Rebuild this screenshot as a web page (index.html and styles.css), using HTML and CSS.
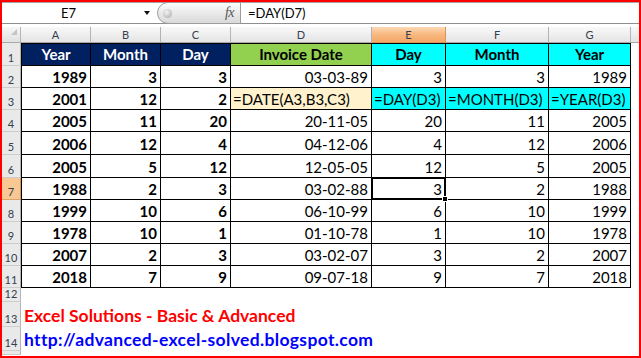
FILE: index.html
```html
<!DOCTYPE html>
<html>
<head>
<meta charset="utf-8">
<link rel="stylesheet" href="styles.css">
</head>
<body>
<div class="frame">
  <div class="fbar">
    <div class="namebox"><span class="ref">E7</span><span class="dd"></span></div>
    <div class="pill"><span class="knob"></span><span class="fx">fx</span></div>
    <div class="formula">=DAY(D7)</div>
  </div>
  <div class="sheet">
    <div class="corner"><span class="tri"></span></div>
    <div class="ch">A</div><div class="ch">B</div><div class="ch">C</div><div class="ch">D</div><div class="ch sel">E</div><div class="ch">F</div><div class="ch">G</div><div class="ch last"></div>

    <div class="rh">1</div>
    <div class="c top a hd navy">Year</div><div class="c top hd navy">Month</div><div class="c top hd navy">Day</div><div class="c top hd green">Invoice Date</div><div class="c top hd cyan">Day</div><div class="c top hd cyan">Month</div><div class="c top hd cyan">Year</div><div class="e"></div>

    <div class="rh">2</div>
    <div class="c a b">1989</div><div class="c b">3</div><div class="c b">3</div><div class="c">03-03-89</div><div class="c">3</div><div class="c">3</div><div class="c">1989</div><div class="e"></div>

    <div class="rh">3</div>
    <div class="c a b">2001</div><div class="c b">12</div><div class="c b">2</div><div class="c f yellow">=DATE(A3,B3,C3)</div><div class="c f cyanf">=DAY(D3)</div><div class="c f cyanf">=MONTH(D3)</div><div class="c f cyanf">=YEAR(D3)</div><div class="e"></div>

    <div class="rh">4</div>
    <div class="c a b">2005</div><div class="c b">11</div><div class="c b">20</div><div class="c">20-11-05</div><div class="c">20</div><div class="c">11</div><div class="c">2005</div><div class="e"></div>

    <div class="rh">5</div>
    <div class="c a b">2006</div><div class="c b">12</div><div class="c b">4</div><div class="c">04-12-06</div><div class="c">4</div><div class="c">12</div><div class="c">2006</div><div class="e"></div>

    <div class="rh">6</div>
    <div class="c a b">2005</div><div class="c b">5</div><div class="c b">12</div><div class="c">12-05-05</div><div class="c">12</div><div class="c">5</div><div class="c">2005</div><div class="e"></div>

    <div class="rh sel">7</div>
    <div class="c a b">1988</div><div class="c b">2</div><div class="c b">3</div><div class="c">03-02-88</div><div class="c active">3<span class="selbox"><span class="handle"></span></span></div><div class="c">2</div><div class="c">1988</div><div class="e"></div>

    <div class="rh">8</div>
    <div class="c a b">1999</div><div class="c b">10</div><div class="c b">6</div><div class="c">06-10-99</div><div class="c">6</div><div class="c">10</div><div class="c">1999</div><div class="e"></div>

    <div class="rh">9</div>
    <div class="c a b">1978</div><div class="c b">10</div><div class="c b">1</div><div class="c">01-10-78</div><div class="c">1</div><div class="c">10</div><div class="c">1978</div><div class="e"></div>

    <div class="rh">10</div>
    <div class="c a b">2007</div><div class="c b">2</div><div class="c b">3</div><div class="c">03-02-07</div><div class="c">3</div><div class="c">2</div><div class="c">2007</div><div class="e"></div>

    <div class="rh">11</div>
    <div class="c a b">2018</div><div class="c b">7</div><div class="c b">9</div><div class="c">09-07-18</div><div class="c">9</div><div class="c">7</div><div class="c">2018</div><div class="e"></div>

    <div class="rh">12</div>
    <div class="wide"></div>

    <div class="rh">13</div>
    <div class="wide note red">Excel Solutions - Basic &amp; Advanced</div>

    <div class="rh">14</div>
    <div class="wide note blue">http://advanced-excel-solved.blogspot.com</div>

    <div class="rh"></div>
    <div class="wide"></div>
  </div>
</div>
</body>
</html>
```

FILE: styles.css
```css
html, body {
  margin: 0;
  padding: 0;
  background: #fff;
}

.frame {
  width: 641px;
  height: 358px;
  box-sizing: border-box;
  border: 2px solid #ff0000;
  overflow: hidden;
  background: #fff;
  font-family: Lato, "Liberation Sans", sans-serif;
}

/* formula bar */
.fbar {
  display: flex;
  height: 22px;
  border-top: 1px solid #a3a3a3;
  border-bottom: 1px solid #8e8e8e;
  margin-bottom: 3px;
  box-sizing: border-box;
  background: #fff;
}

.namebox {
  width: 155px;
  display: flex;
  align-items: center;
  flex: none;
}

.ref {
  width: 133px;
  text-align: center;
  font-size: 13px;
  color: #000;
}

.dd {
  margin-left: 9px;
  width: 0;
  height: 0;
  border-left: 3.5px solid transparent;
  border-right: 3.5px solid transparent;
  border-top: 4px solid #111;
}

.pill {
  width: 84px;
  flex: none;
  box-sizing: border-box;
  margin-top: -1px;
  margin-bottom: -1px;
  border: 1px solid #9c9c9c;
  border-radius: 11px 0 0 11px;
  background: linear-gradient(#fbfbfb, #e6e6e6 60%, #dadada);
  display: flex;
  align-items: center;
  padding-left: 5px;
  padding-right: 6px;
}

.knob {
  width: 9px;
  height: 9px;
  border-radius: 50%;
  background: radial-gradient(circle at 40% 35%, #f4f4f4, #bdbdbd 70%, #a9a9a9);
}

.fx {
  margin-left: auto;
  font-family: "Liberation Serif", serif;
  font-style: italic;
  font-size: 14px;
  color: #555;
  letter-spacing: -0.5px;
}

.formula {
  padding-left: 7px;
  font-size: 13px;
  display: flex;
  align-items: center;
  color: #000;
}

/* sheet */
.sheet {
  display: grid;
  grid-template-columns: 19px 70px 70px 70px 141px 74px 103px 82px 1fr;
  grid-template-rows: 16px 23px 22px 22px 22px 23px 23px 22px 22px 22px 22px 22px 14px 25px 24px 1fr;
  height: 328px;
}

.corner {
  background: linear-gradient(#f7f7f7, #e1e1e1);
  border-right: 1px solid #b5b5b5;
  border-bottom: 1px solid #a9a9a9;
  box-sizing: border-box;
  position: relative;
}

.tri {
  position: absolute;
  left: 9px;
  top: 2px;
  width: 0;
  height: 0;
  border-left: 6px solid transparent;
  border-bottom: 6px solid #c4c4c4;
}

.ch {
  background: linear-gradient(#f9f9f9, #e4e4e4);
  border-right: 1px solid #b3b3b3;
  border-bottom: 1px solid #a9a9a9;
  box-sizing: border-box;
  font-size: 11px;
  line-height: 15px;
  text-align: center;
  color: #34404e;
}

.ch.sel {
  background: linear-gradient(#fcd8b4, #f8b57c 55%, #f4a869);
  border-right-color: #d99556;
  border-bottom-color: #d99556;
}

.ch.last {
  border-right: none;
}

.rh {
  background: #e9e9e9;
  border-right: 1px solid #b5b5b5;
  border-bottom: 1px solid #cdcdcd;
  box-sizing: border-box;
  font-size: 11px;
  line-height: 13px;
  color: #34404e;
  display: flex;
  align-items: flex-end;
  justify-content: center;
  padding-bottom: 1px;
}

.rh.sel {
  background: #f8c793;
  border-bottom-color: #e0a468;
  border-right-color: #d99556;
}

.c {
  box-sizing: border-box;
  border-right: 1px solid #000;
  border-bottom: 1px solid #000;
  font-size: 15px;
  line-height: 20px;
  padding: 0 3px;
  display: flex;
  align-items: flex-end;
  justify-content: flex-end;
  white-space: nowrap;
  overflow: hidden;
  color: #000;
}

.c.a {
  border-left: 1px solid #000;
}

.c.top {
  border-top: 1px solid #000;
  padding-bottom: 1px;
}

.c.b {
  font-weight: 700;
}

.c.hd {
  font-weight: 700;
  justify-content: center;
}

.navy {
  background: #002060;
  color: #fff;
}

.green {
  background: #92d050;
}

.cyan {
  background: #00ffff;
}

.c.f {
  justify-content: flex-start;
  padding-left: 2px;
  overflow: visible;
}

.yellow {
  background: #fff2cc;
}

.cyanf {
  background: #00ffff;
}

.e {
  background: #fff;
}

.wide {
  grid-column: 2 / -1;
  background: #fff;
}

.note {
  display: flex;
  align-items: flex-end;
  padding-left: 3px;
  padding-bottom: 1px;
  font-weight: 700;
  font-size: 17.5px;
  line-height: 20px;
  white-space: nowrap;
}

.red {
  color: #ff0000;
}

.blue {
  color: #0000ff;
  letter-spacing: 0.35px;
}

.c.active {
  position: relative;
  overflow: visible;
}

.selbox {
  position: absolute;
  left: -1px;
  top: -1px;
  right: -1px;
  bottom: -1px;
  border: 2px solid #000;
  box-sizing: border-box;
}

.handle {
  position: absolute;
  right: -4px;
  bottom: -4px;
  width: 4px;
  height: 4px;
  background: #000;
  border: 1px solid #fff;
}
```
